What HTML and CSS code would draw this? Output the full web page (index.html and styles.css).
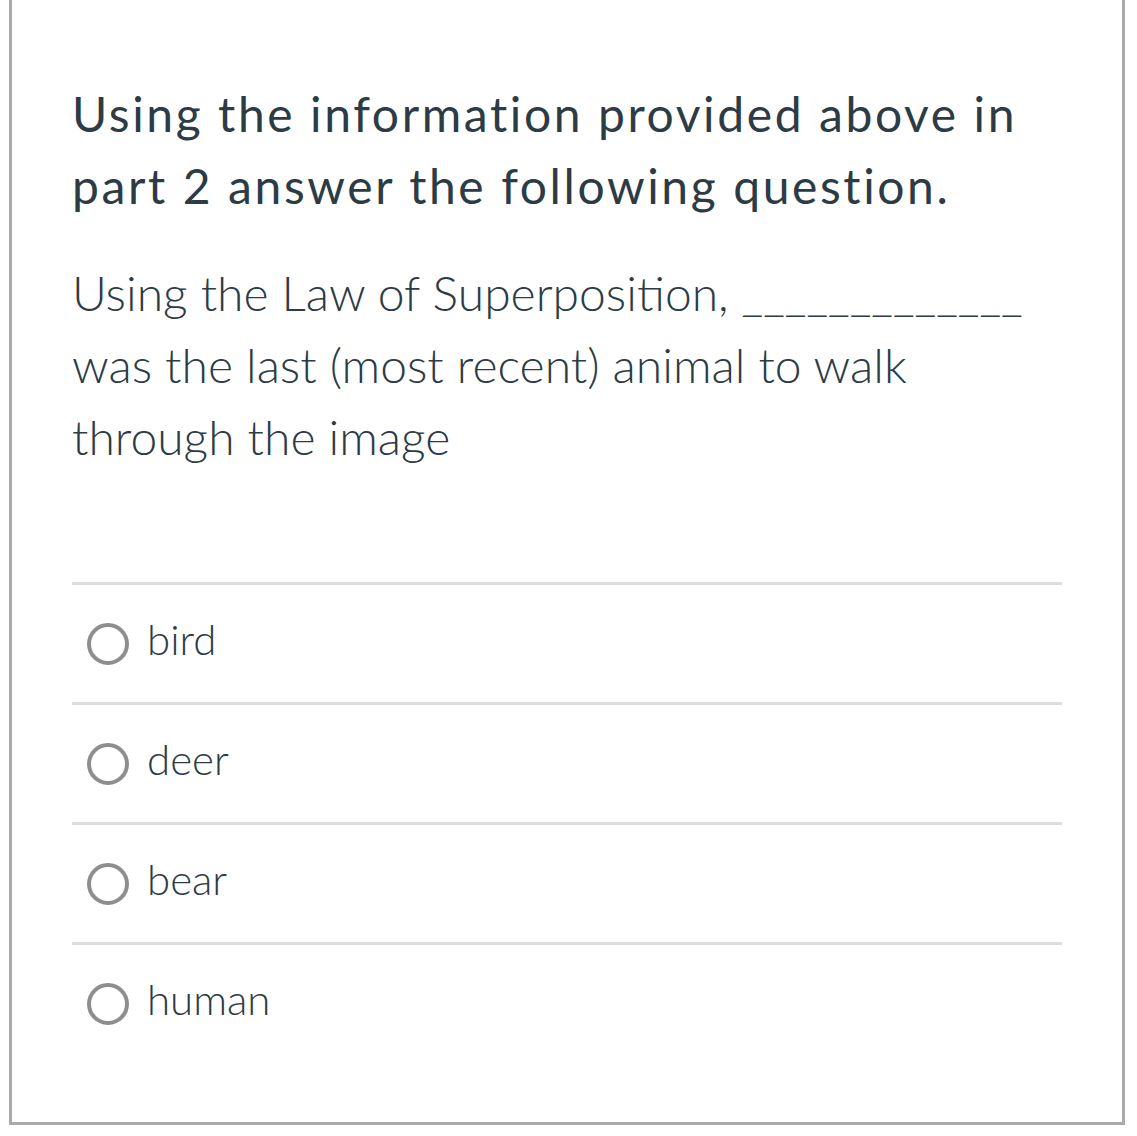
FILE: index.html
```html
<!DOCTYPE html>
<html>
<head>
<meta charset="utf-8">
<link rel="stylesheet" href="styles.css">
</head>
<body>
<div class="card">
  <p class="title">Using the information provided above in part 2 answer the following question.</p>
  <p class="question">Using the Law of Superposition, _____________ was the last (most recent) animal to walk through the image</p>
  <div class="answers">
    <div class="answer"><span class="radio"></span><span class="label">bird</span></div>
    <div class="answer"><span class="radio"></span><span class="label">deer</span></div>
    <div class="answer"><span class="radio"></span><span class="label">bear</span></div>
    <div class="answer"><span class="radio"></span><span class="label">human</span></div>
  </div>
</div>
</body>
</html>
```
FILE: styles.css
```css
html, body {
  margin: 0;
  padding: 0;
  background: #fff;
}
body {
  font-family: Lato, "Noto Sans", sans-serif;
  color: #2d3b45;
}
.card {
  box-sizing: border-box;
  margin-left: 9px;
  width: 1116px;
  height: 1125px;
  border: 3px solid #aaaaaa;
  border-top: none;
  padding: 78px 60px 0 60px;
}
.title {
  margin: 0;
  font-size: 48px;
  line-height: 72px;
  font-weight: 400;
  letter-spacing: 2.6px;
}
.question {
  margin: 35px 0 0 0;
  font-size: 48px;
  line-height: 72px;
  font-weight: 300;
}
.answers {
  margin-top: 109px;
}
.answer {
  border-top: 3px solid #dddddd;
  height: 117px;
  display: flex;
  align-items: center;
  padding-left: 15px;
}
.radio {
  box-sizing: border-box;
  width: 42px;
  height: 42px;
  border: 4px solid #8e8e8e;
  border-radius: 50%;
  flex: none;
}
.label {
  margin-left: 18px;
  padding-bottom: 10px;
  font-size: 42px;
  font-weight: 300;
  line-height: 48px;
}
```
